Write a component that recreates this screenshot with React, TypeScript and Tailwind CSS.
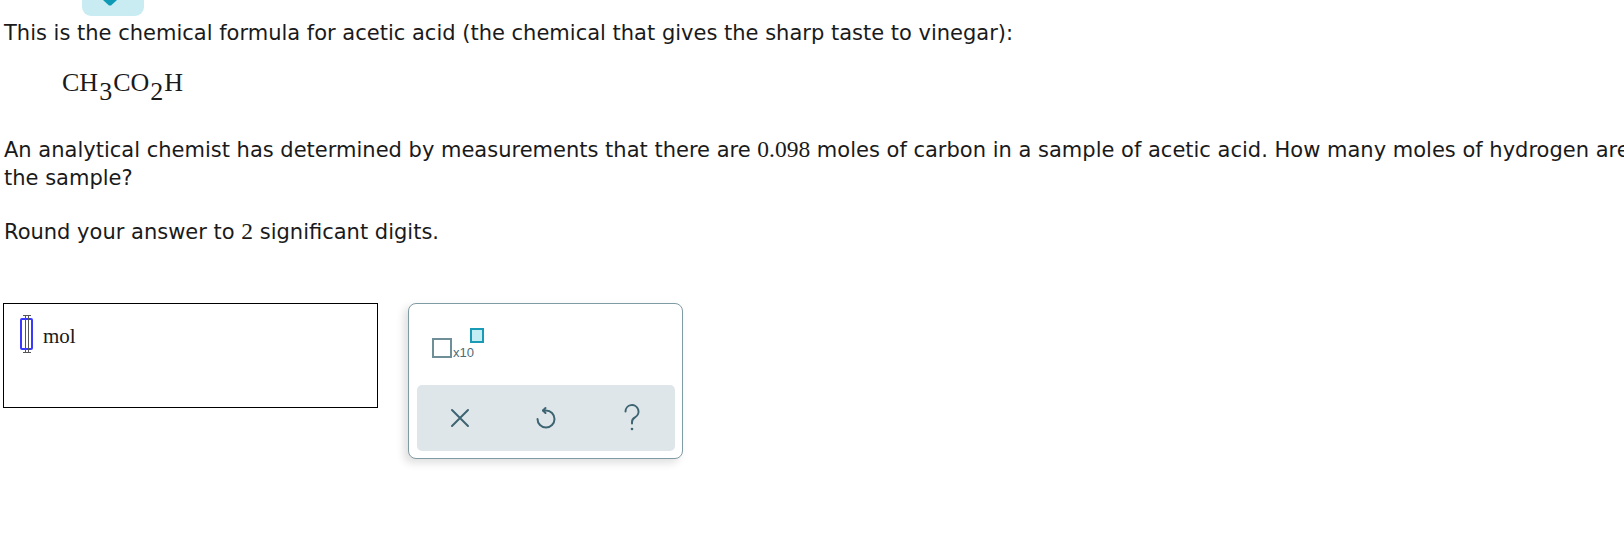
import React from 'react';

const sans = { fontFamily: '"DejaVu Sans", Verdana, sans-serif' };

function Num({ children }: { children: React.ReactNode }) {
  return (
    <span className="font-['Liberation_Serif',serif] text-[23.5px] leading-none">{children}</span>
  );
}

function Cursor() {
  return (
    <div className="relative w-[13px] h-[32px] border-2 border-[#3a3aff] rounded-[2px]">
      <div className="absolute left-1/2 -translate-x-1/2 top-[-4px] bottom-[-4px] w-[4px] flex justify-between">
        <div className="w-px bg-[#555]" />
        <div className="w-px bg-[#555]" />
      </div>
      <div className="absolute left-1/2 -translate-x-1/2 top-[-5px] w-[8px] h-px bg-[#555]" />
      <div className="absolute left-1/2 -translate-x-1/2 bottom-[-5px] w-[8px] h-px bg-[#555]" />
    </div>
  );
}

function ClearIcon() {
  return (
    <svg width="20" height="20" viewBox="0 0 20 20" fill="none" stroke="#3d6472" strokeWidth="2" strokeLinecap="round">
      <path d="M2 2 L18 18 M18 2 L2 18" />
    </svg>
  );
}

function UndoIcon() {
  return (
    <svg width="24" height="24" viewBox="0 0 24 24" fill="none" stroke="#3d6472" strokeWidth="2" strokeLinecap="round" strokeLinejoin="round">
      <path d="M3.5 13 A8.5 8.5 0 1 0 12 4.5 H9" />
      <path d="M11.5 2 L9 4.5 L11.5 7" />
    </svg>
  );
}

function HelpIcon() {
  return (
    <svg width="18" height="30" viewBox="0 0 18 30" fill="none" stroke="#3d6472" strokeWidth="2" strokeLinecap="round">
      <path d="M2.5 8.5 A6.5 6.5 0 1 1 12 14.3 C10 15.4 9 16.8 9 19 V20.5" />
      <circle cx="9" cy="26" r="1.3" fill="#3d6472" stroke="none" />
    </svg>
  );
}

export default function App() {
  return (
    <div className="w-full h-[543px] overflow-hidden bg-white text-[#1a1a1a]" style={sans}>
      <div className="w-[1800px] pl-[4px]">
        {/* top tab */}
        <div className="ml-[78px] w-[62px] h-[16px] rounded-b-[9px] bg-[#c9ecf3] flex justify-center overflow-hidden">
          <svg width="14" height="6" viewBox="0 0 14 6" className="ml-[-6px]">
            <polygon points="0,0 14,0 8,5.5 6,5.5" fill="#0e9ab5" />
          </svg>
        </div>

        <p className="mt-[3px] text-[21px] leading-[28px]">
          This is the chemical formula for acetic acid (the chemical that gives the sharp taste to vinegar):
        </p>

        <div className="mt-[22px] ml-[58px] font-['Liberation_Serif',serif] text-[26px] leading-[28px]">
          CH<sub className="text-[1em] bottom-[-9px] mx-[1px]">3</sub>CO<sub className="text-[1em] bottom-[-9px] mx-[1px]">2</sub>H
        </div>

        <p className="mt-[39px] text-[21px] leading-[28px] whitespace-nowrap">
          An analytical chemist has determined by measurements that there are <Num>0.098</Num> moles of carbon in a sample of acetic acid. How many moles of hydrogen are in
          <br />
          the sample?
        </p>

        <p className="mt-[26px] text-[21px] leading-[28px]">
          Round your answer to <Num>2</Num> significant digits.
        </p>

        <div className="mt-[57px] flex items-start">
          <div className="w-[375px] h-[105px] border border-black ml-[-1px] flex items-start pt-[14px] pl-[16px]">
            <Cursor />
            <span className="ml-[10px] mt-[6px] font-['Liberation_Serif',serif] text-[21px] leading-[24px]">mol</span>
          </div>

          <div className="ml-[30px] w-[275px] h-[156px] border border-[#7f9ba3] rounded-[8px] bg-white shadow-[-4px_4px_8px_rgba(0,0,0,0.13)] flex flex-col">
            <div className="h-[81px] pl-[23px] pt-[24px] flex items-start">
              <div className="flex items-start">
                <div className="mt-[10px] w-[20px] h-[20px] border-2 border-[#6f8f98]" />
                <span className="mt-[18px] ml-[1px] font-['Liberation_Sans',Arial,sans-serif] text-[13px] leading-[13px] text-[#4b6d77]">x10</span>
                <div className="ml-[-4px] w-[14px] h-[15px] border-2 border-[#1a9bb5] bg-[#c5edf4]" />
              </div>
            </div>
            <div className="mr-[7px] ml-[8px] h-[66px] rounded-[5px] bg-[#dfe6e9] grid grid-cols-3 items-center justify-items-center">
              <ClearIcon />
              <UndoIcon />
              <HelpIcon />
            </div>
          </div>
        </div>
      </div>
    </div>
  );
}
